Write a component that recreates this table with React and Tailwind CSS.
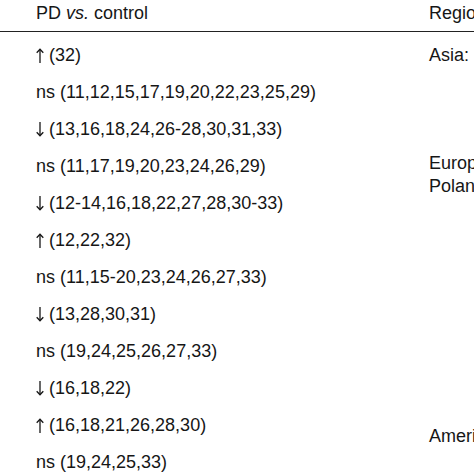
const rows = [
  ['up', '(32)'],
  ['ns', '(11,12,15,17,19,20,22,23,25,29)'],
  ['down', '(13,16,18,24,26-28,30,31,33)'],
  ['ns', '(11,17,19,20,23,24,26,29)'],
  ['down', '(12-14,16,18,22,27,28,30-33)'],
  ['up', '(12,22,32)'],
  ['ns', '(11,15-20,23,24,26,27,33)'],
  ['down', '(13,28,30,31)'],
  ['ns', '(19,24,25,26,27,33)'],
  ['down', '(16,18,22)'],
  ['up', '(16,18,21,26,28,30)'],
  ['ns', '(19,24,25,33)'],
]

// thin helvetica-style arrow
const Arrow = ({ down }) => (
  <svg
    width="8"
    height="15"
    viewBox="0 0 8 15"
    className={`inline-block align-[-2px] ${down ? 'rotate-180' : ''}`}
    fill="none"
    stroke="currentColor"
    strokeWidth="1.3"
  >
    <path d="M4 1.2V15" />
    <path d="M0.7 4.8L4 1.2L7.3 4.8" />
  </svg>
)

const App = () => {
  return (
    <div className="w-[474px] h-[474px] overflow-hidden bg-white text-[18px] text-[#161616] font-['Liberation_Sans',Arial,sans-serif] whitespace-nowrap">
      {/* Header */}
      <div className="grid grid-cols-[429px_1fr] h-[31.5px] border-b-[1.5px] border-[#222]">
        <div className="pl-[36px] leading-[26px]">
          PD <span className="italic">vs.</span> control
        </div>
        <div className="leading-[26px]">Region</div>
      </div>

      {/* Body */}
      <div className="grid grid-cols-[429px_1fr] pt-[5px]">
        <div className="flex flex-col pl-[36px]">
          {rows.map(([kind, ids], i) => (
            <div key={i} className="h-[37px] flex items-center leading-[22px]">
              <span>
                {kind === 'ns' ? 'ns' : <Arrow down={kind === 'down'} />} {ids}
              </span>
            </div>
          ))}
        </div>
        <div className="flex flex-col">
          <div className="h-[37px] flex items-center leading-[22px]">Asia: China</div>
          <div className="mt-[78.5px] leading-[23px]">
            Europe: Germany,
            <br />
            Poland, Spain
          </div>
          <div className="mt-[227px] leading-[22px]">America: USA</div>
        </div>
      </div>
    </div>
  )
}

export default App
